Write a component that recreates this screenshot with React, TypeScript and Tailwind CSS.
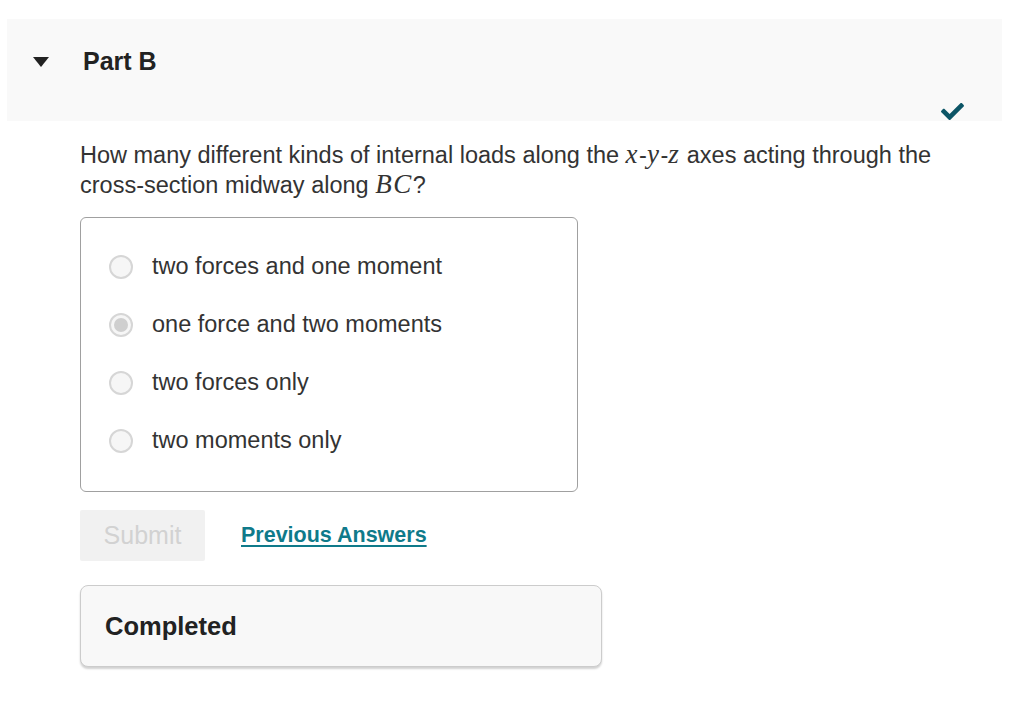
import React from 'react';
import { FaCheck } from 'react-icons/fa';

const options = [
  { label: 'two forces and one moment', checked: false },
  { label: 'one force and two moments', checked: true },
  { label: 'two forces only', checked: false },
  { label: 'two moments only', checked: false },
];

const M = ({ children }: { children: React.ReactNode }) => (
  <span className="font-['Liberation_Serif',serif] text-[27px] italic leading-none tracking-[1.5px]">{children}</span>
);

export default function App() {
  return (
    <div className="min-h-screen bg-white pt-[19px] font-['Liberation_Sans',Arial,sans-serif] text-[#333]">
      {/* part header */}
      <div className="relative mx-[7px] mr-[22px] h-[102px] bg-[#f9f9f9]">
        <div className="flex items-center pt-[24px]">
          <svg className="ml-[26px] h-[10px] w-[16px]" viewBox="0 0 16 10">
            <path d="M0 0 H16 L8 10 Z" fill="#222" />
          </svg>
          <h2 className="ml-[34px] text-[25px] font-bold text-[#222]">Part B</h2>
        </div>
        <FaCheck className="absolute right-[38px] bottom-[-2px] h-[23px] w-[23px] text-[#0c5566]" />
      </div>

      <div className="pl-[80px]">
        <p className="mt-[19px] w-[880px] text-[23.5px] leading-[30px]">
          How many different kinds of internal loads along the <M>x</M>-<M>y</M>-<M>z</M> axes acting through the cross-section midway along <M>BC</M>?
        </p>

        <div className="mt-[17px] w-[498px] rounded-[6px] border-[1.5px] border-[#a0a0a0] px-[28px] pt-[37px] pb-[38px]">
          <div className="flex flex-col gap-[34px]">
            {options.map((o) => (
              <label key={o.label} className="flex h-[24px] items-center">
                <span className="flex h-[24px] w-[24px] items-center justify-center rounded-full border-2 border-[#d6d6d6] bg-[#f6f6f6]">
                  {o.checked && <span className="h-[14px] w-[14px] rounded-full bg-[#cfcfcf]" />}
                </span>
                <span className="ml-[19px] text-[23.5px] text-[#333]">{o.label}</span>
              </label>
            ))}
          </div>
        </div>

        <div className="mt-[18px] flex items-center">
          <button className="h-[51px] w-[125px] rounded-[2px] bg-[#f1f1f1] text-[25px] text-[#d2d2d2]">Submit</button>
          <a href="#" className="ml-[36px] text-[21.5px] font-bold text-[#0f7a8a] underline underline-offset-[3px]">
            Previous Answers
          </a>
        </div>

        <div className="mt-[24px] flex h-[82px] w-[522px] items-center rounded-[8px] border-[1.5px] border-[#cccccc] bg-[#f8f8f8] pl-[24px] shadow-[0_2px_2px_rgba(0,0,0,0.18)]">
          <span className="text-[25.5px] font-bold text-[#222]">Completed</span>
        </div>
      </div>
    </div>
  );
}
